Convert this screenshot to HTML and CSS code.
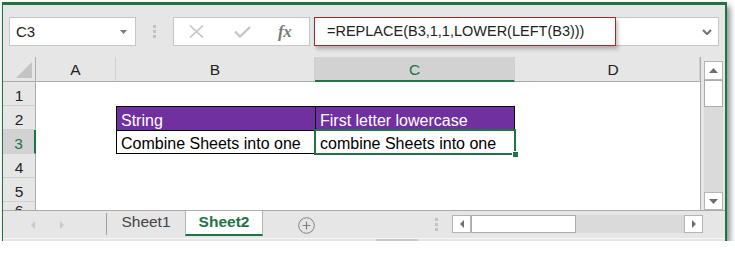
FILE: index.html
```html
<!DOCTYPE html>
<html lang="en">
<head>
    <meta charset="UTF-8">
    <meta name="viewport" content="width=device-width, initial-scale=1.0">
    <title>REPLACE - first letter lowercase</title>
    <link rel="stylesheet" href="styles.css">
</head>
<body>
    <div class="window">
        <!-- name box + formula bar -->
        <div class="formula-bar">
            <div class="name-box">
                <span>C3</span>
                <svg width="7" height="4" viewBox="0 0 7 4"><polygon points="0,0 7,0 3.5,4" fill="#7a7a7a"/></svg>
            </div>
            <div class="grip"><i></i><i></i><i></i></div>
            <div class="fx-box">
                <svg class="icon-x" width="15" height="13" viewBox="0 0 15 13"><path d="M1 0.5 L14 12.5 M14 0.5 L1 12.5" stroke="#c6c6c6" stroke-width="1.7" fill="none"/></svg>
                <svg class="icon-check" width="17" height="12" viewBox="0 0 17 12"><path d="M1 5.5 L6 10.5 L16 1" stroke="#c6c6c6" stroke-width="2.4" fill="none"/></svg>
                <span class="fx">fx</span>
            </div>
            <div class="formula">
                <div class="formula-text">=REPLACE(B3,1,1,LOWER(LEFT(B3)))</div>
                <svg class="chevron" width="10" height="6" viewBox="0 0 10 6"><path d="M1 1 L5 5 L9 1" stroke="#777" stroke-width="2.2" fill="none"/></svg>
            </div>
        </div>

        <!-- worksheet -->
        <div class="sheet-area">
            <div class="grid">
                <div class="corner">
                    <svg width="16" height="16" viewBox="0 0 16 16"><polygon points="16,0 16,16 0,16" fill="#c3c3c3"/></svg>
                </div>
                <div class="col-head">A</div>
                <div class="col-head">B</div>
                <div class="col-head active">C</div>
                <div class="col-head last">D</div>

                <div class="row-head">1</div>
                <div class="cell"></div>
                <div class="cell"></div>
                <div class="cell"></div>
                <div class="cell"></div>

                <div class="row-head">2</div>
                <div class="cell"></div>
                <div class="cell tb tb-head">String</div>
                <div class="cell tb tb-head tb-right">First letter lowercase</div>
                <div class="cell"></div>

                <div class="row-head active">3</div>
                <div class="cell"></div>
                <div class="cell tb tb-bottom">Combine Sheets into one</div>
                <div class="cell tb tb-right tb-bottom selected">combine Sheets into one<span class="sel-box"></span><span class="fill-handle"></span></div>
                <div class="cell"></div>

                <div class="row-head">4</div>
                <div class="cell"></div>
                <div class="cell"></div>
                <div class="cell"></div>
                <div class="cell"></div>

                <div class="row-head">5</div>
                <div class="cell"></div>
                <div class="cell"></div>
                <div class="cell"></div>
                <div class="cell"></div>

                <div class="row-head">6</div>
                <div class="cell"></div>
                <div class="cell"></div>
                <div class="cell"></div>
                <div class="cell"></div>
            </div>
            <div class="vscroll">
                <div class="sb-btn">
                    <svg width="9" height="5" viewBox="0 0 9 5"><polygon points="0,5 9,5 4.5,0" fill="#6f6f6f"/></svg>
                </div>
                <div class="sb-thumb v"></div>
                <div class="sb-track"></div>
                <div class="sb-btn down">
                    <svg width="9" height="5" viewBox="0 0 9 5"><polygon points="0,0 9,0 4.5,5" fill="#6f6f6f"/></svg>
                </div>
            </div>
        </div>

        <!-- sheet tabs -->
        <div class="tab-bar">
            <div class="tab-nav">
                <svg width="4" height="8" viewBox="0 0 4 8"><polygon points="4,0 4,8 0,4" fill="#c9c9c9"/></svg>
                <svg width="4" height="8" viewBox="0 0 4 8"><polygon points="0,0 0,8 4,4" fill="#c9c9c9"/></svg>
            </div>
            <div class="tab-sep"></div>
            <div class="tab">Sheet1</div>
            <div class="tab active">Sheet2</div>
            <div class="add-sheet">
                <svg width="17" height="17" viewBox="0 0 17 17">
                    <circle cx="8.5" cy="8.5" r="7.8" stroke="#808080" stroke-width="1" fill="none"/>
                    <path d="M8.5 4.5 V12.5 M4.5 8.5 H12.5" stroke="#808080" stroke-width="1.2"/>
                </svg>
            </div>
            <div class="spacer"></div>
            <div class="grip small"><i></i><i></i><i></i></div>
            <div class="hscroll">
                <div class="sb-btn">
                    <svg width="4" height="8" viewBox="0 0 4 8"><polygon points="4,0 4,8 0,4" fill="#6f6f6f"/></svg>
                </div>
                <div class="sb-thumb h"></div>
                <div class="sb-track"></div>
                <div class="sb-btn">
                    <svg width="4" height="8" viewBox="0 0 4 8"><polygon points="0,0 0,8 4,4" fill="#6f6f6f"/></svg>
                </div>
            </div>
        </div>
        <div class="status-bar"><div class="status-mark"></div></div>
    </div>
</body>
</html>
```

FILE: styles.css
```css
* {
    margin: 0;
    padding: 0;
    box-sizing: border-box;
}

body {
    font-family: 'Liberation Sans', Arial, sans-serif;
    background-color: #ffffff;
    color: #000;
}

.window {
    width: 725px;
    height: 239px;
    margin: 2px 0 0 2px;
    border-top: 3px solid #217346;
    border-left: 1px solid #217346;
    border-right: 2px solid #217346;
    background-color: #e6e6e6;
    box-shadow: 3px 4px 6px rgba(0, 0, 0, 0.45);
    display: flex;
    flex-direction: column;
}

/* ---------- formula bar ---------- */

.formula-bar {
    height: 52px;
    display: flex;
    align-items: flex-start;
    padding: 12px 0 0 6px;
}

.name-box {
    width: 127px;
    height: 29px;
    background: #fff;
    border: 1px solid #c6c6c6;
    display: flex;
    align-items: center;
    justify-content: space-between;
    padding: 0 8px 0 6px;
    font-size: 15px;
    color: #222;
}

.grip {
    display: flex;
    flex-direction: column;
    gap: 2px;
    margin: 8px 0 0 17px;
}

.grip i {
    display: block;
    width: 3px;
    height: 3px;
    background: #c2c2c2;
}

.fx-box {
    width: 137px;
    height: 29px;
    margin-left: 17px;
    background: #fff;
    border: 1px solid #c6c6c6;
    display: flex;
    align-items: center;
    padding-left: 15px;
}

.fx-box .icon-check {
    margin-left: 30px;
}

.fx-box .fx {
    margin-left: 27px;
    font-family: 'Liberation Serif', 'Times New Roman', serif;
    font-style: italic;
    font-weight: bold;
    font-size: 17px;
    color: #7a7a7a;
    letter-spacing: -0.5px;
}

.formula {
    width: 405px;
    height: 29px;
    margin-left: 4px;
    background: #fff;
    border: 1px solid #c6c6c6;
    display: flex;
    align-items: center;
    justify-content: space-between;
    padding-right: 6px;
}

.formula-text {
    width: 302px;
    height: 29px;
    margin: 0 0 0 -1px;
    border: 1px solid #a5282b;
    box-shadow: 2px 3px 4px rgba(0, 0, 0, 0.25);
    padding-left: 12px;
    font-size: 14.5px;
    line-height: 27px;
    color: #222;
    background: #fff;
}

/* ---------- worksheet ---------- */

.sheet-area {
    height: 153px;
    display: flex;
}

.grid {
    width: 698px;
    display: grid;
    grid-template-columns: 33px 80px 199px 200px 1fr;
    grid-template-rows: 25px repeat(5, 24px) 1fr;
    background: #fff;
    border-right: 1px solid #ababab;
    overflow: hidden;
    font-size: 15.5px;
}

.corner,
.col-head,
.row-head {
    background: #e6e6e6;
    color: #222;
}

.corner {
    display: flex;
    align-items: flex-end;
    justify-content: flex-end;
    padding: 0 3px 3px 0;
    border-right: 1px solid #ababab;
    border-bottom: 1px solid #ababab;
}

.col-head {
    display: flex;
    align-items: flex-end;
    justify-content: center;
    line-height: 17px;
    padding-bottom: 3px;
    border-right: 1px solid #d0d0d0;
    border-bottom: 1px solid #ababab;
}

.col-head.last {
    padding-left: 12px;
}

.col-head.active {
    background: #d2d2d2;
    color: #217346;
    border-bottom: 2px solid #217346;
    padding-bottom: 2px;
}

.row-head {
    display: flex;
    align-items: flex-end;
    justify-content: center;
    line-height: 17px;
    padding-bottom: 1px;
    border-bottom: 1px solid #d0d0d0;
    border-right: 1px solid #ababab;
}

.row-head.active {
    background: #d2d2d2;
    color: #217346;
    border-right: 2px solid #217346;
}

.cell {
    display: flex;
    align-items: flex-end;
    font-size: 16px;
    line-height: 17px;
    padding: 0 4px 1px;
    white-space: nowrap;
}

.cell.tb {
    border-top: 1px solid #000;
    border-left: 1px solid #000;
}

.cell.tb-right {
    border-right: 1px solid #000;
}

.cell.tb-bottom {
    border-bottom: 1px solid #000;
}

.cell.tb-head {
    background: #7030a0;
    color: #fff;
}

.cell.selected {
    position: relative;
}

.sel-box {
    position: absolute;
    top: -2px;
    left: -2px;
    right: -2px;
    bottom: -2px;
    border: 2px solid #217346;
}

.fill-handle {
    position: absolute;
    right: -5px;
    bottom: -5px;
    width: 7px;
    height: 7px;
    background: #217346;
    border: 1px solid #fff;
}

/* ---------- scroll bars ---------- */

.vscroll {
    width: 24px;
    display: flex;
    flex-direction: column;
    padding: 4px 2px 0 3px;
}

.sb-btn {
    width: 19px;
    height: 19px;
    background: #fff;
    border: 1px solid #b4b4b4;
    display: flex;
    align-items: center;
    justify-content: center;
}

.sb-btn.down {
    height: 18px;
}

.sb-thumb {
    background: #fff;
    border: 1px solid #ababab;
}

.sb-thumb.v {
    height: 27px;
}

.sb-track {
    flex: 1;
    background: #dadada;
}

.hscroll {
    width: 251px;
    height: 18px;
    margin: 4px 22px 0 14px;
    display: flex;
}

.hscroll .sb-btn {
    height: 18px;
}

.sb-thumb.h {
    width: 105px;
}

/* ---------- sheet tabs ---------- */

.tab-bar {
    height: 28px;
    border-top: 1px solid #ababab;
    display: flex;
    align-items: flex-start;
}

.tab-nav {
    width: 103px;
    height: 27px;
    display: flex;
    align-items: center;
    padding-left: 28px;
    gap: 25px;
}

.tab-sep {
    width: 1px;
    height: 22px;
    margin-top: 2px;
    background: #a0a0a0;
}

.tab {
    width: 78px;
    height: 25px;
    text-align: center;
    font-size: 15.5px;
    line-height: 22px;
    color: #444;
}

.tab.active {
    background: #fff;
    border-left: 1px solid #b4b4b4;
    border-right: 1px solid #b4b4b4;
    border-bottom: 2px solid #217346;
    color: #217346;
    font-weight: bold;
}

.add-sheet {
    margin: 6px 0 0 35px;
    height: 17px;
}

.spacer {
    flex: 1;
}

.grip.small {
    margin: 7px 0 0 0;
}

.status-bar {
    height: 3px;
    border-top: 1px solid #f7f7f7;
}

.status-mark {
    width: 42px;
    height: 2px;
    margin-left: 373px;
    background: #c8c8c8;
}
```
